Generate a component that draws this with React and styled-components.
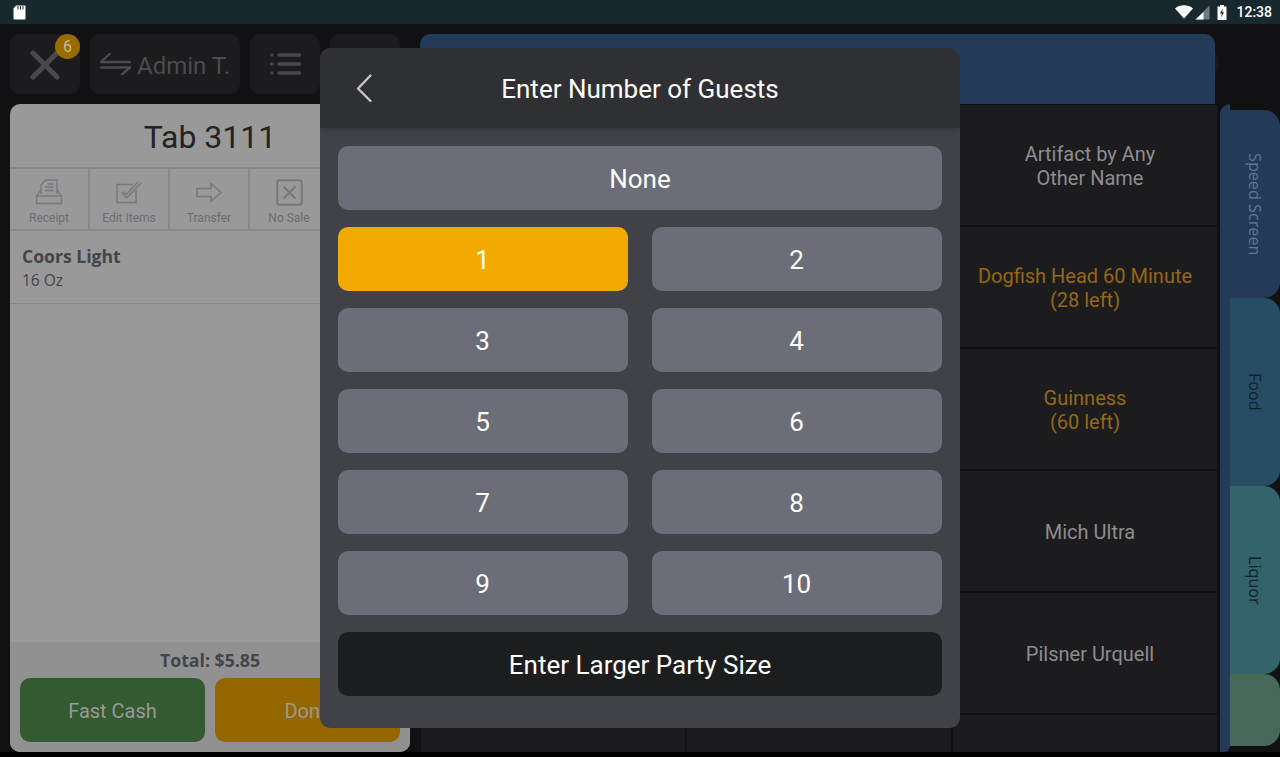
import React from "react";
import styled, { createGlobalStyle } from "styled-components";

const Global = createGlobalStyle`
  html, body { margin: 0; padding: 0; background: #000; }
  * { box-sizing: border-box; }
  body { font-family: Roboto, "Liberation Sans", sans-serif; }
`;

const Screen = styled.div`
  position: relative;
  isolation: isolate;
  width: 1280px;
  height: 757px;
  display: flex;
  flex-direction: column;
  overflow: hidden;
  background: #111113;
`;

const StatusBar = styled.div`
  flex: 0 0 24px;
  display: flex;
  align-items: center;
  justify-content: space-between;
  padding: 0 8px 0 13px;
  background: #18282f;
  color: #fff;
`;

const StatusRight = styled.div`
  display: flex;
  align-items: center;
`;

const Clock = styled.span`
  margin-left: 9px;
  font-size: 14px;
  font-weight: 500;
  line-height: 24px;
`;

const Content = styled.div`
  flex: 1;
  min-height: 0;
  display: flex;
`;

const NavStrip = styled.div`
  flex: 0 0 5px;
  background: #000;
`;

const LeftColumn = styled.div`
  flex: 0 0 420px;
  display: flex;
  flex-direction: column;
  gap: 10px;
  padding: 10px 10px 0;
`;

const Toolbar = styled.div`
  flex: 0 0 60px;
  display: flex;
  gap: 10px;
`;

const ToolButton = styled.div`
  position: relative;
  width: ${(p) => p.$w}px;
  display: flex;
  align-items: center;
  justify-content: center;
  gap: 6px;
  background: #1c1c1e;
  border-radius: 10px;
  color: #4b4b4f;
  font-size: 24px;
`;

const ToolLabel = styled.span`
  margin-top: 3px;
`;

const Badge = styled.span`
  position: absolute;
  top: 0;
  right: 0;
  width: 25px;
  height: 25px;
  border-radius: 50%;
  background: #9a6c00;
  color: #c9b88a;
  font-size: 16px;
  display: flex;
  align-items: center;
  justify-content: center;
`;

const TicketPanel = styled.div`
  flex: 1;
  min-height: 0;
  display: flex;
  flex-direction: column;
  background: #999999;
  border-radius: 10px;
  overflow: hidden;
`;

const TicketTitle = styled.div`
  flex: 0 0 65px;
  display: flex;
  align-items: center;
  justify-content: center;
  font-size: 32px;
  color: #232325;
  padding-top: 2px;
  border-bottom: 2px solid #87878b;
`;

const ActionRow = styled.div`
  flex: 0 0 62px;
  display: flex;
  border-bottom: 2px solid #87878b;
`;

const Action = styled.div`
  flex: 0 0 80px;
  display: flex;
  flex-direction: column;
  align-items: center;
  border-right: 2px solid #87878b;
  color: #6c6d73;
  font-size: 12px;
  padding-top: 8px;
`;

const ActionIcon = styled.div`
  height: 30px;
  display: flex;
  align-items: center;
  justify-content: center;
`;

const ActionLabel = styled.span`
  margin-top: 4px;
  line-height: 14px;
`;

const LineItem = styled.div`
  height: 73px;
  padding: 13px 12px 0;
  border-bottom: 1px solid #87878b;
  color: #44454b;
`;

const ItemName = styled.div`
  font-family: "Open Sans", sans-serif;
  font-weight: 700;
  font-size: 17.6px;
  line-height: 24px;
`;

const ItemSize = styled.div`
  margin-top: 1px;
  font-family: "Open Sans", sans-serif;
  font-size: 15.5px;
  line-height: 22px;
`;

const Spacer = styled.div`
  flex: 1;
`;

const TicketFooter = styled.div`
  flex: 0 0 110px;
  background: #919191;
  padding: 6px 10px 0;
  display: flex;
  flex-direction: column;
  gap: 6px;
`;

const Total = styled.div`
  font-family: "Open Sans", sans-serif;
  font-weight: 700;
  font-size: 17.7px;
  line-height: 24px;
  text-align: center;
  color: #44454b;
`;

const FooterButtons = styled.div`
  display: flex;
  gap: 10px;
`;

const FooterButton = styled.div`
  flex: 1;
  height: 64px;
  display: flex;
  align-items: center;
  justify-content: center;
  padding-top: 2px;
  border-radius: 10px;
  background: ${(p) => p.$bg};
  color: #999999;
  font-size: 20px;
`;

const RightColumn = styled.div`
  flex: 1;
  min-width: 0;
  display: flex;
  flex-direction: column;
  padding-top: 10px;
`;

const Banner = styled.div`
  position: relative;
  flex: 0 0 70px;
  width: 795px;
  background: #233a58;
  border-radius: 10px 10px 0 0;
  &::after {
    content: "";
    position: absolute;
    z-index: -1;
    right: -4px;
    top: 11px;
    width: 40px;
    height: 36px;
    border-radius: 50%;
    background: #1a1a1c;
  }
`;

const BelowBanner = styled.div`
  flex: 1;
  min-height: 0;
  display: flex;
`;

const ItemGrid = styled.div`
  margin-left: 1px;
  flex: 0 0 796px;
  padding-top: 1px;
  display: grid;
  grid-template-columns: repeat(3, 264px);
  grid-auto-rows: 120px;
  gap: 2px;
  overflow: hidden;
`;

const Cell = styled.div`
  display: flex;
  align-items: center;
  justify-content: center;
  padding: 2px 0 0 ${(p) => (p.$low ? 0 : 10)}px;
  background: #1c1c1e;
  color: ${(p) => (p.$low ? "#96680f" : "#8d8d8f")};
  font-size: 20px;
  line-height: 24px;
  text-align: center;
  white-space: pre-line;
`;

const Rail = styled.div`
  margin-left: 3px;
  flex: 1;
  display: flex;
`;

const RailStrip = styled.div`
  flex: 0 0 10px;
  background: #233a58;
  border-radius: 10px 0 6px 0;
`;

const RailTabs = styled.div`
  flex: 1;
  display: flex;
  flex-direction: column;
  padding-top: 6px;
`;

const SideTab = styled.div`
  height: ${(p) => p.$h}px;
  background: ${(p) => p.$bg};
  color: ${(p) => p.$fg};
  border-radius: 0 16px 16px 0;
  display: flex;
  align-items: center;
  justify-content: center;
  padding-right: 1px;
  font-family: "Open Sans", sans-serif;
  font-size: 16.2px;
  writing-mode: vertical-rl;
`;

const Modal = styled.div`
  position: absolute;
  left: 320px;
  top: 48px;
  width: 640px;
  height: 680px;
  display: flex;
  flex-direction: column;
  background: #414247;
  border-radius: 10px;
  overflow: hidden;
`;

const ModalHead = styled.div`
  position: relative;
  flex: 0 0 80px;
  display: flex;
  align-items: center;
  justify-content: center;
  background: #2f3034;
  box-shadow: 0 2px 5px rgba(0, 0, 0, 0.18);
  color: #fff;
  font-size: 26px;
  padding-top: 2px;
`;

const BackIcon = styled.svg`
  position: absolute;
  left: 35px;
  top: 25px;
`;

const ModalBody = styled.div`
  flex: 1;
  padding: 18px 18px 0;
  display: grid;
  grid-template-columns: 290px 290px;
  grid-auto-rows: 64px;
  column-gap: 24px;
  row-gap: 17px;
`;

const Choice = styled.div`
  grid-column: ${(p) => (p.$wide ? "1 / -1" : "auto")};
  display: flex;
  align-items: center;
  justify-content: center;
  padding: 2px ${(p) => (p.$wide ? 0 : 1)}px 0 0;
  border-radius: 10px;
  background: ${(p) => p.$bg || "#6b6d78"};
  color: #fff;
  font-size: 26px;
`;

const guests = ["1", "2", "3", "4", "5", "6", "7", "8", "9", "10"];

const cells = [
  ["Artifact by Any\nOther Name", false],
  ["Dogfish Head 60 Minute\n(28 left)", true],
  ["Guinness\n(60 left)", true],
  ["Mich Ultra", false],
  ["Pilsner Urquell", false],
  ["", false],
];

function Icon({ w, h, children, ...rest }) {
  return (
    <svg width={w} height={h} viewBox={`0 0 ${w} ${h}`} fill="none" {...rest}>
      {children}
    </svg>
  );
}

export default function App() {
  return (
    <Screen>
      <Global />
      <StatusBar>
        <Icon w={13} h={15}>
          <path d="M3 0.5H11.5a1 1 0 0 1 1 1V13.5a1 1 0 0 1-1 1H1.5a1 1 0 0 1-1-1V3.5Z" fill="#fff" />
          <path d="M5 1v3.5M7.5 1v3.5M10 1v3.5" stroke="#18282f" strokeWidth="1" />
        </Icon>
        <StatusRight>
          <Icon w={18} h={14}>
            <path d="M0 3.5C4.8 -0.8 13.2 -0.8 18 3.5L9 13.5Z" fill="#fff" />
          </Icon>
          <Icon w={15} h={15} style={{ marginLeft: 2 }}>
            <path d="M14.5 0.5V14.5H0.5Z" fill="#6f7b80" />
            <path d="M8.5 7V14.5H0.5Z" fill="#fff" />
          </Icon>
          <Icon w={10} h={15} style={{ marginLeft: 7 }}>
            <path d="M3 0H7V1.5H9.5V15H0.5V1.5H3Z" fill="#fff" />
            <path d="M5.8 3.5L3 8.6H4.8L4.1 12.5L7 7.2H5.2Z" fill="#18282f" />
          </Icon>
          <Clock>12:38</Clock>
        </StatusRight>
      </StatusBar>
      <Content>
        <LeftColumn>
          <Toolbar>
            <ToolButton $w={70}>
              <Icon w={30} h={30} style={{ transform: "translateY(1px)" }}>
                <path d="M3 3L27 27M27 3L3 27" stroke="#49494d" strokeWidth="5" strokeLinecap="round" />
              </Icon>
              <Badge>6</Badge>
            </ToolButton>
            <ToolButton $w={150}>
              <Icon w={31} h={22}>
                <path d="M1 9H30M9.5 1L1 9M1 14.5H30M22 21.5L30 14.5" stroke="#4b4b4f" strokeWidth="2.4" strokeLinecap="round" />
              </Icon>
              <ToolLabel>Admin T.</ToolLabel>
            </ToolButton>
            <ToolButton $w={70}>
              <Icon w={31} h={22}>
                <circle cx="2" cy="2" r="1.8" fill="#48484c" />
                <circle cx="2" cy="11" r="1.8" fill="#48484c" />
                <circle cx="2" cy="20" r="1.8" fill="#48484c" />
                <path d="M9 2H29.5M9 11H29.5M9 20H29.5" stroke="#48484c" strokeWidth="3.4" strokeLinecap="round" />
              </Icon>
            </ToolButton>
            <ToolButton $w={70} />
          </Toolbar>
          <TicketPanel>
            <TicketTitle>Tab 3111</TicketTitle>
            <ActionRow>
              <Action>
                <ActionIcon>
                  <Icon w={28} h={26}>
                    <path d="M6 15V6L10.5 1H22V15" stroke="#77787e" strokeWidth="1.4" />
                    <path d="M10 8H18.5M10 11.5H18.5M12.5 5H18.5" stroke="#77787e" strokeWidth="1.3" />
                    <path d="M6 11L1.5 17V24.5H26.5V17L22 11M1.5 17H26.5" stroke="#77787e" strokeWidth="1.4" strokeLinejoin="round" />
                  </Icon>
                </ActionIcon>
                <ActionLabel>Receipt</ActionLabel>
              </Action>
              <Action>
                <ActionIcon>
                  <Icon w={27} h={23}>
                    <path d="M20 9V21.5H1V3.5H17" stroke="#77787e" strokeWidth="1.5" />
                    <path d="M5.5 11L10.5 17L25.5 1.5M8 10.5L10.5 13.5L22 1" stroke="#77787e" strokeWidth="1.4" />
                  </Icon>
                </ActionIcon>
                <ActionLabel>Edit Items</ActionLabel>
              </Action>
              <Action>
                <ActionIcon>
                  <Icon w={26} h={21}>
                    <path d="M1 6.5H15V1.5L25 10.5L15 19.5V14.5H1Z" stroke="#77787e" strokeWidth="1.5" strokeLinejoin="round" />
                  </Icon>
                </ActionIcon>
                <ActionLabel>Transfer</ActionLabel>
              </Action>
              <Action>
                <ActionIcon>
                  <Icon w={27} h={27}>
                    <rect x="1.2" y="1.2" width="24.6" height="24.6" rx="2.5" stroke="#77787e" strokeWidth="2" />
                    <path d="M7.5 7.5L19.5 19.5M19.5 7.5L7.5 19.5" stroke="#77787e" strokeWidth="2" />
                  </Icon>
                </ActionIcon>
                <ActionLabel>No Sale</ActionLabel>
              </Action>
            </ActionRow>
            <LineItem>
              <ItemName>Coors Light</ItemName>
              <ItemSize>16 Oz</ItemSize>
            </LineItem>
            <Spacer />
            <TicketFooter>
              <Total>Total: $5.85</Total>
              <FooterButtons>
                <FooterButton $bg="#335a30">Fast Cash</FooterButton>
                <FooterButton $bg="#946600">Done</FooterButton>
              </FooterButtons>
            </TicketFooter>
          </TicketPanel>
        </LeftColumn>
        <RightColumn>
          <Banner />
          <BelowBanner>
            <ItemGrid>
              {cells.map(([label, low]) => (
                <React.Fragment key={label}>
                  <Cell />
                  <Cell />
                  <Cell $low={low}>{label}</Cell>
                </React.Fragment>
              ))}
            </ItemGrid>
            <Rail>
              <RailStrip />
              <RailTabs>
                <SideTab $h={188} $bg="#233a58" $fg="#5d7a94">Speed Screen</SideTab>
                <SideTab $h={188} $bg="#264d63" $fg="#0f1f2a">Food</SideTab>
                <SideTab $h={188} $bg="#33636b" $fg="#0f2228">Liquor</SideTab>
                <SideTab $h={72} $bg="#47695a" $fg="#47695a" />
              </RailTabs>
            </Rail>
          </BelowBanner>
        </RightColumn>
      </Content>
      <NavStrip />
      <Modal>
        <ModalHead>
          <BackIcon width="18" height="30" viewBox="0 0 18 30" fill="none">
            <path d="M15.5 2.5L3 15.5L15.5 28" stroke="#c4c4c6" strokeWidth="2.4" strokeLinecap="round" strokeLinejoin="round" />
          </BackIcon>
          Enter Number of Guests
        </ModalHead>
        <ModalBody>
          <Choice $wide>None</Choice>
          {guests.map((g) => (
            <Choice key={g} $bg={g === "1" ? "#f0aa00" : undefined}>{g}</Choice>
          ))}
          <Choice $wide $bg="#1c1d1f">Enter Larger Party Size</Choice>
        </ModalBody>
      </Modal>
    </Screen>
  );
}
